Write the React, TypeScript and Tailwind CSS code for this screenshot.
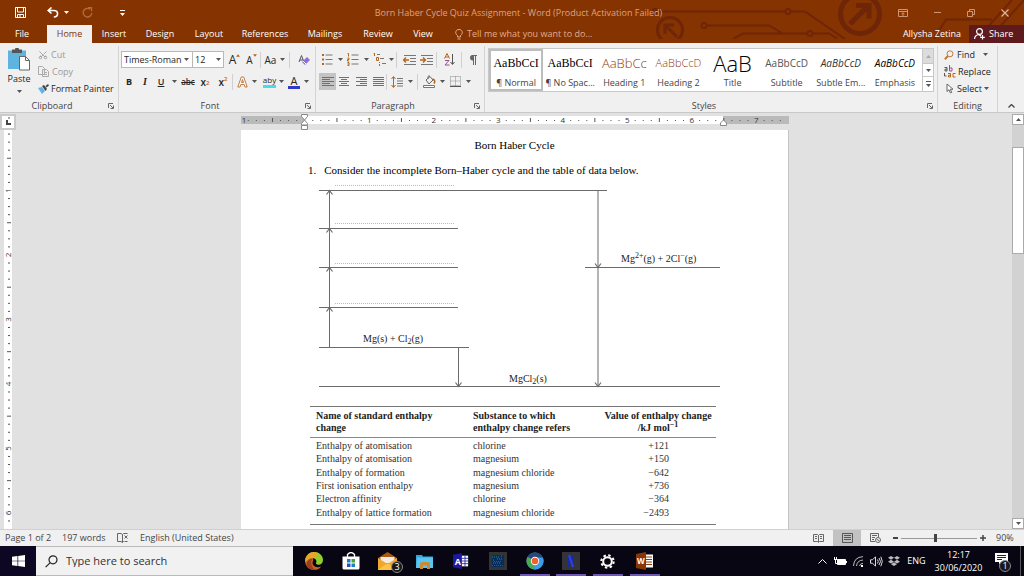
import React from "react";
import { FaDropbox } from "react-icons/fa";
import { FiScissors } from "react-icons/fi";
import { twMerge } from "tailwind-merge";

const tabs = [
  { name: "Insert", width: "w-11" },
  { name: "Design", width: "w-12" },
  { name: "Layout", width: "w-[50px]" },
  { name: "References", width: "w-[62px]" },
  { name: "Mailings", width: "w-[58px]" },
  { name: "Review", width: "w-12" },
  { name: "View", width: "w-[42px]" },
];

const styles = [
  { name: "¶ Normal", sample: "AaBbCcI", look: "font-['Liberation_Serif'] text-[12px] text-black" },
  { name: "¶ No Spac...", sample: "AaBbCcI", look: "font-['Liberation_Serif'] text-[12px] text-black" },
  { name: "Heading 1", sample: "AaBbCc", look: "font-light text-[13px] text-[#8a3c14]" },
  { name: "Heading 2", sample: "AaBbCcD", look: "font-light text-[11px] text-[#8a3c14]" },
  { name: "Title", sample: "AaB", look: "font-light text-[22px] text-black" },
  { name: "Subtitle", sample: "AaBbCcD", look: "text-[10px] text-[#555]" },
  { name: "Subtle Em...", sample: "AaBbCcD", look: "italic text-[10px] text-[#333]" },
  { name: "Emphasis", sample: "AaBbCcD", look: "italic text-[10px] text-black" },
];

const enthalpies = [
  ["Enthalpy of atomisation", "chlorine", "+121"],
  ["Enthalpy of atomisation", "magnesium", "+150"],
  ["Enthalpy of formation", "magnesium chloride", "−642"],
  ["First ionisation enthalpy", "magnesium", "+736"],
  ["Electron affinity", "chlorine", "−364"],
  ["Enthalpy of lattice formation", "magnesium chloride", "−2493"],
];

type BtnProps = { label: string; className?: string; children?: React.ReactNode };

const Btn = ({ label, className = "", children }: BtnProps) => (
  <button aria-label={label} className={twMerge("flex h-[17px] shrink-0 items-center justify-center", className)}>
    {children}
  </button>
);

const Caret = () => (
  <svg width="5" height="3" viewBox="0 0 5 3" className="shrink-0">
    <path d="M0 0h5L2.500 3z" fill="#555" />
  </svg>
);

const Sep = () => <div className="h-4 w-px shrink-0 bg-[#d0d0d0]" />;

const Launcher = ({ label }: { label: string }) => (
  <button aria-label={label} className="ml-1">
    <svg width="6" height="6" viewBox="0 0 6 6" fill="none" stroke="#666">
      <path d="M.5 5V.5H5M2 2l3 3M5.500 2.500v3h-3" />
    </svg>
  </button>
);

const Group = ({ name, launcher, className, children }: { name: string; launcher?: boolean; className: string; children: React.ReactNode }) => (
  <section className={`flex flex-col border-r border-[#d4d4d4] ${className}`}>
    <div className="flex-1">{children}</div>
    <div className={`flex h-3 items-center text-[#444] ${launcher ? "pr-1" : ""}`}>
      <span className="flex-1 text-center">{name}</span>
      {launcher && <Launcher label={`${name} settings`} />}
    </div>
  </section>
);

const Lines = ({ rows }: { rows: number[][] }) => (
  <svg width="12" height="11" viewBox="0 0 12 11" stroke="#707070">
    {rows.map(([a, b], i) => (
      <path key={i} d={`M${a} ${i * 2 + 1.5}H${b}`} />
    ))}
  </svg>
);

const ListIcon = ({ kind }: { kind: "dots" | "numbers" | "levels" }) => (
  <svg width="13" height="13" viewBox="0 0 13 13">
    {kind === "dots" && (
      <g>
        <path d="M4.500 2h7M4.500 6.500h7M4.500 11h7" stroke="#777" />
        <path d="M1 1h2v2H1zM1 5.500h2v2H1zM1 10h2v2H1z" fill="#b5651d" />
      </g>
    )}
    {kind === "numbers" && (
      <g>
        <path d="M4.500 2h7M4.500 6.500h7M4.500 11h7" stroke="#777" />
        <path d="M.5 .5h1v3M.5 5h1.500v1.500H.5V8H2M.5 9.500h1.500v3H.5M.5 11H2" stroke="#b5651d" fill="none" />
      </g>
    )}
    {kind === "levels" && (
      <g fill="none">
        <path d="M4 1.500h3M7 5.500h4M9 10.500h4" stroke="#777" />
        <path d="M.5 0h1v3M3.500 4.500h2v3h-2zM6.500 9v1M6.500 11v2" stroke="#b5651d" />
      </g>
    )}
  </svg>
);

const IndentIcon = ({ right }: { right?: boolean }) => (
  <svg width="14" height="12" viewBox="0 0 14 12" fill="none">
    <path d="M1 1.500h12M7 4.500h6M7 7.500h6M1 10.500h12" stroke="#777" />
    <path d={right ? "M0 6h5M3 3.500L5.500 6 3 8.500" : "M6 6H1M3 3.500L.5 6 3 8.500"} stroke="#b5651d" strokeWidth="1.400" />
  </svg>
);

const Circuit = () => (
  <svg className="absolute right-0 top-0" width="374" height="39" viewBox="650 0 374 39" fill="none" stroke="#6f2508" strokeWidth="2">
    <circle cx="655" cy="11.500" r="2.500" />
    <path d="M658 11.500h127M791 11.500h14L845 39M707 25.500h62l14 8h24M733 39l10-5.500h40M813 33.500h16l8 5" />
    <circle cx="788" cy="11.500" r="2.500" />
    <circle cx="704" cy="25.500" r="2.500" />
    <circle cx="810" cy="33.500" r="2.500" />
    <circle cx="860" cy="14" r="19.500" strokeWidth="5" />
    <path d="M850 24l18-18M856 5.500h13v13" strokeWidth="5" />
    <circle cx="670" cy="30" r="12.500" strokeWidth="3" />
    <path d="M677 37l-11-11M665 34v-9h9" strokeWidth="3" />
    <path d="M934 39l12-19.500h46M984 31l28-31M996 31l28-31" />
  </svg>
);

const TitleBar = () => (
  <header className="relative bg-[#853300] text-white">
    <Circuit />
    <div className="relative flex h-[25px] items-center">
      <div className="flex flex-1 items-center pl-[15px]">
        <button aria-label="Save">
          <svg width="11" height="11" viewBox="0 0 11 11" fill="none" stroke="#fff">
            <path d="M.5 .5h10v10H.5zM2.500 .5V5h6V.5M2.500 10.500V7.500h6v3M5 8v2.500" />
          </svg>
        </button>
        <button aria-label="Undo" className="ml-[21px]">
          <svg width="12" height="11" viewBox="0 0 12 11" fill="none" stroke="#fff" strokeWidth="1.600">
            <path d="M4.500 .5L1.200 3.500l3.300 3M1.500 3.500h5.300c5 0 5 6.500 0 6.500" />
          </svg>
        </button>
        <svg className="ml-[5px]" width="5" height="3" viewBox="0 0 5 3">
          <path d="M0 0h5L2.500 3z" fill="#fff" />
        </svg>
        <button aria-label="Repeat" className="ml-[13px]">
          <svg width="11" height="11" viewBox="0 0 11 11" fill="none" stroke="#b06a3c" strokeWidth="1.400">
            <path d="M8 2.200A4.300 4.300 0 1 0 9.800 6M6 .7h3.500v3.500" />
          </svg>
        </button>
        <button aria-label="Customize Quick Access Toolbar" className="ml-[27px]">
          <svg width="5" height="6" viewBox="0 0 5 6" fill="#fff">
            <path d="M0 0h5v1H0zM0 3h5L2.500 6z" />
          </svg>
        </button>
      </div>
      <h1 className="text-[#dca483]">Born Haber Cycle Quiz Assignment - Word (Product Activation Failed)</h1>
      <div className="flex flex-1 justify-end pr-[2px] text-[#cf9473]">
        <Btn label="Ribbon Display Options" className="w-[34px]">
          <svg width="10" height="8" viewBox="0 0 10 8" fill="none" stroke="currentColor">
            <path d="M.5 .5h9v7h-9zM.5 2.500h9M5 7V4M3.500 5L5 3.800 6.500 5" />
          </svg>
        </Btn>
        <Btn label="Minimize" className="w-[34px]">
          <span className="h-px w-[7px] bg-current" />
        </Btn>
        <Btn label="Restore" className="w-[34px]">
          <svg width="8" height="8" viewBox="0 0 8 8" fill="none" stroke="currentColor">
            <path d="M.5 2.500h5v5h-5zM2.500 2V.5h5v5H6" />
          </svg>
        </Btn>
        <Btn label="Close" className="w-[34px]">
          <svg width="8" height="8" viewBox="0 0 8 8" fill="none" stroke="#e2b49a" strokeWidth="1.200">
            <path d="M.5 .5l7 7M7.500 .5l-7 7" />
          </svg>
        </Btn>
      </div>
    </div>
    <nav className="relative flex h-[18px]">
      <button className="w-11">File</button>
      <button className="ml-[3px] w-[45px] bg-[#f0f0f0] text-[#853300]">Home</button>
      {tabs.map((tab) => (
        <button key={tab.name} className={`text-center ${tab.width}`}>
          {tab.name}
        </button>
      ))}
      <button className="ml-[11px] flex items-center gap-1 text-[#e0ad90]">
        <svg width="8" height="11" viewBox="0 0 8 11" fill="none" stroke="currentColor">
          <path d="M2.500 8V6.500C-.5 4.500 .5 .5 4 .5s4.500 4 1.500 6V8zM2.500 10h3" />
        </svg>
        Tell me what you want to do...
      </button>
      <button className="ml-auto pr-2">Allysha Zetina</button>
      <button className="flex w-[55px] items-center gap-1 bg-[#5f1a1e] pl-[5px]">
        <svg width="11" height="12" viewBox="0 0 11 12" fill="none" stroke="#fff" strokeWidth="1.200">
          <circle cx="5.500" cy="3.500" r="2.900" />
          <path d="M.6 11C.6 8.500 2.500 7 4.500 6.500L7 8M8.500 7v4.500M6.200 9.300h4.600" />
        </svg>
        Share
      </button>
    </nav>
  </header>
);

const Clipboard = () => (
  <Group name="Clipboard" launcher className="w-[119px]">
    <div className="flex">
      <button className="flex w-[38px] flex-col items-center pt-[2px]">
        <svg width="22" height="23" viewBox="0 0 22 23">
          <path d="M0 2.500h18V21H0z" fill="#5fb4df" />
          <path d="M4 1.500h3a2 2 0 0 1 4 0h3V5H4z" fill="#555" />
          <path d="M11.500 8.500h6l4 4V22h-10z" fill="#fff" stroke="#666" />
          <path d="M17.500 8.500v4h4" fill="none" stroke="#666" />
        </svg>
        <span className="leading-[16px]">Paste</span>
        <span className="flex h-2 items-center">
          <Caret />
        </span>
      </button>
      <div className="flex flex-col">
        <button className="flex h-[17px] items-center text-[#999]">
          <FiScissors size={10} className="mr-[3px] -rotate-90" />
          Cut
        </button>
        <button className="flex h-[17px] items-center text-[#999]">
          <svg className="mr-[3px]" width="11" height="11" viewBox="0 0 11 11" fill="#f0f0f0" stroke="#aaa">
            <path d="M.5 .5h4l2 2v6h-6zM4.500 3.500h4l2 2v5h-6zM6 6.500h3M6 8.500h3" />
          </svg>
          Copy
        </button>
        <button className="flex h-[17px] items-center">
          <svg className="mr-[2px]" width="11" height="10" viewBox="0 0 11 10">
            <path d="M0 4l4-1 3 4-3 3z" fill="#5fb4df" />
            <path d="M4 2l2-1 3 4-1.500 2zM7.500 2L10 0l1 1.500L8.500 3.500z" fill="#444" />
          </svg>
          Format Painter
        </button>
      </div>
    </div>
  </Group>
);

const Font = () => (
  <Group name="Font" launcher className="w-[197px]">
    <div className="flex items-center pl-[2px] pt-[5px]">
      <label className="relative flex">
        <select aria-label="Font" defaultValue="Times-Roman" className="h-[17px] w-[72px] appearance-none border border-[#b8b8b8] bg-white pl-[2px] leading-[15px]">
          <option>Times-Roman</option>
        </select>
        <span className="absolute right-1 top-[7px]">
          <Caret />
        </span>
      </label>
      <label className="relative -ml-px flex">
        <select aria-label="Font size" defaultValue="12" className="h-[17px] w-8 appearance-none border border-[#b8b8b8] bg-white pl-[2px] leading-[15px]">
          <option>12</option>
        </select>
        <span className="absolute right-[3px] top-[7px]">
          <Caret />
        </span>
      </label>
      <Btn label="Increase font size" className="ml-[2px] w-[17px] text-[12px]">
        A
        <svg className="-mt-2" width="4" height="3" viewBox="0 0 5 3">
          <path d="M0 3h5L2.500 0z" fill="#b5651d" />
        </svg>
      </Btn>
      <Btn label="Decrease font size" className="w-[17px] text-[10px]">
        A
        <svg className="-mt-2" width="4" height="3" viewBox="0 0 5 3">
          <path d="M0 0h5L2.500 3z" fill="#b5651d" />
        </svg>
      </Btn>
      <Sep />
      <Btn label="Change case" className="w-7 gap-1 text-[10px]">
        Aa <Caret />
      </Btn>
      <Sep />
      <Btn label="Clear all formatting" className="w-7">
        <svg width="12" height="12" viewBox="0 0 12 12">
          <path d="M1 8L3.500 1.500 6 8M2 6h3" stroke="#555" fill="none" />
          <path d="M4 8l5-5 3 3-5 5z" fill="#8a70d8" />
          <path d="M5 7l3 3" stroke="#fff" />
        </svg>
      </Btn>
    </div>
    <div className="flex items-center pl-[2px] pt-[5px]">
      <Btn label="Bold" className="w-4 font-bold">B</Btn>
      <Btn label="Italic" className="w-4 font-['Liberation_Serif'] text-[10px] font-bold italic">I</Btn>
      <Btn label="Underline" className="w-4 font-semibold underline">U</Btn>
      <span className="flex w-[11px] justify-center">
        <Caret />
      </span>
      <Btn label="Strikethrough" className="w-4 text-[8px] font-semibold line-through">abc</Btn>
      <Btn label="Subscript" className="w-[18px] text-[10px] font-semibold">
        x<sub className="text-[6px] text-[#b5651d]">2</sub>
      </Btn>
      <Btn label="Superscript" className="w-[18px] text-[10px] font-semibold">
        x<sup className="text-[6px] text-[#b5651d]">2</sup>
      </Btn>
      <Sep />
      <Btn label="Text effects" className="w-7 gap-1">
        <svg width="11" height="12" viewBox="0 0 11 12" fill="#fff" stroke="#c07a3e">
          <path d="M.8 11L4.300 1h2.400l3.500 10H8l-.8-2.500H3.800L3 11zM4.500 6.500h2L5.500 3.500z" />
        </svg>
        <Caret />
      </Btn>
      <Btn label="Text highlight color" className="w-[25px] gap-[3px]">
        <span className="flex flex-col items-center border-b-[3px] border-[#3fe0e8] text-[8px] leading-[10px]">aby</span>
        <Caret />
      </Btn>
      <Btn label="Font color" className="w-[25px] gap-1">
        <span className="w-3 border-b-[3px] border-[#3238c8] text-[11px] leading-[11px]">A</span>
        <Caret />
      </Btn>
    </div>
  </Group>
);

const Paragraph = () => (
  <Group name="Paragraph" launcher className="w-[169px]">
    <div className="flex items-center pl-[3px] pt-[5px]">
      <Btn label="Bullets" className="w-[26px] gap-1">
        <ListIcon kind="dots" />
        <Caret />
      </Btn>
      <Btn label="Numbering" className="w-[26px] gap-1">
        <ListIcon kind="numbers" />
        <Caret />
      </Btn>
      <Btn label="Multilevel list" className="w-[25px] gap-[3px]">
        <ListIcon kind="levels" />
        <Caret />
      </Btn>
      <Sep />
      <Btn label="Decrease indent" className="ml-1 w-[17px]">
        <IndentIcon />
      </Btn>
      <Btn label="Increase indent" className="w-[17px]">
        <IndentIcon right />
      </Btn>
      <span className="w-px" />
      <Sep />
      <Btn label="Sort" className="w-6">
        <svg width="11" height="13" viewBox="0 0 11 13" fill="none">
          <path d="M.5 5.500L3 .5l2.500 5M1.500 4h3" stroke="#b5651d" />
          <path d="M1 7.500h4L1 12h4.500" stroke="#a04a9a" />
          <path d="M8.500 1v10M6.500 9l2 2.500 2-2.500" stroke="#555" />
        </svg>
      </Btn>
      <Sep />
      <Btn label="Show paragraph marks" className="w-[22px]">
        <svg width="8" height="10" viewBox="0 0 8 10">
          <path d="M3.500 0H8v1H7v9H6V1H5v9H4V5.500a2.700 2.700 0 0 1-.5-5.500z" fill="#666" />
        </svg>
      </Btn>
    </div>
    <div className="flex items-center pl-[3px] pt-[5px]">
      <Btn label="Align left" className="w-[17px] bg-[#c4c4c4]">
        <Lines rows={[[0, 12], [0, 8], [0, 12], [0, 8], [0, 12]]} />
      </Btn>
      <Btn label="Center" className="w-4">
        <Lines rows={[[1, 11], [3, 9], [1, 11], [3, 9], [1, 11]]} />
      </Btn>
      <Btn label="Align right" className="w-[17px]">
        <Lines rows={[[1, 12], [5, 12], [1, 12], [5, 12], [1, 12]]} />
      </Btn>
      <Btn label="Justify" className="w-[17px]">
        <Lines rows={[[1, 12], [1, 12], [1, 12], [1, 12], [1, 12]]} />
      </Btn>
      <Sep />
      <Btn label="Line spacing" className="w-[30px] gap-1">
        <svg width="13" height="12" viewBox="0 0 13 12" fill="none">
          <path d="M6 2.500h6M6 5h6M6 7.500h6M6 10h6" stroke="#777" />
          <path d="M2.500 1v10M.5 3l2-2.500 2 2.500M.5 9l2 2.500 2-2.500" stroke="#b5651d" />
        </svg>
        <Caret />
      </Btn>
      <Sep />
      <Btn label="Shading" className="ml-1 w-6 gap-1">
        <svg width="13" height="13" viewBox="0 0 13 13" fill="none">
          <path d="M3 5l4-3.500L10 5 6 9zM5 4V1.500q1-1.500 2 0" stroke="#666" />
          <path d="M9.500 4c3 1 2.500 3 1.500 4.500" stroke="#b5651d" strokeWidth="1.500" />
          <path d="M.5 10.500h11v2H.5z" fill="#fff" stroke="#777" />
        </svg>
        <Caret />
      </Btn>
      <Btn label="Borders" className="w-[29px] gap-[5px]">
        <svg width="11" height="11" viewBox="0 0 11 11" fill="none">
          <path d="M.5 .5h10v9H.5zM5.500 .5v9M.5 5h10" stroke="#888" strokeDasharray="1 1" />
          <path d="M0 10.500h11" stroke="#555" />
        </svg>
        <Caret />
      </Btn>
    </div>
  </Group>
);

const Styles = () => (
  <Group name="Styles" launcher className="min-w-0 flex-1">
    <div className="mx-[3px] mt-[2px] flex h-11 border border-[#c8c8c8] bg-white">
      {styles.map((style, i) => (
        <button
          key={style.name}
          className={`flex min-w-0 flex-1 flex-col items-center border-2 ${i === 0 ? "border-[#bdbdbd]" : "border-transparent"}`}
        >
          <span className={`h-[26px] leading-[24px] ${style.look}`}>{style.sample}</span>
          <span className="leading-[12px] text-[#444]">{style.name}</span>
        </button>
      ))}
      <div className="flex w-[11px] flex-col border-l border-[#c8c8c8]">
        <Btn label="Scroll styles up" className="h-[14px] bg-[#dcdcdc]">
          <svg width="5" height="3" viewBox="0 0 5 3">
            <path d="M0 3h5L2.500 0z" fill="#aaa" />
          </svg>
        </Btn>
        <Btn label="Scroll styles down" className="h-[14px] border-y border-[#c8c8c8]">
          <Caret />
        </Btn>
        <Btn label="More styles" className="h-[14px]">
          <svg width="5" height="6" viewBox="0 0 5 6" fill="#555">
            <path d="M0 0h5v1H0zM0 3h5L2.500 6z" />
          </svg>
        </Btn>
      </div>
    </div>
  </Group>
);

const Editing = () => (
  <Group name="Editing" className="w-[60px]">
    <div className="flex flex-col pl-[6px]">
      <button className="flex h-[17px] items-center">
        <svg className="mr-[3px]" width="10" height="10" viewBox="0 0 10 10" fill="none" stroke="#c07a3e">
          <circle cx="6" cy="3.800" r="3" />
          <path d="M4 6L.8 9.200" strokeWidth="2" />
        </svg>
        <span className="mr-2">Find</span>
        <Caret />
      </button>
      <button className="flex h-[17px] items-center">
        <svg className="mr-[2px]" width="12" height="13" viewBox="0 0 12 13" fill="none">
          <path d="M.5 2.500h2.500V6H1V4.200h2" stroke="#555" />
          <path d="M5.500 0v6h2.500V3H5.500" stroke="#a04a9a" />
          <path d="M4 8.500h2.500V12H4.500v-1.800h2M11.500 8.500H9V12h2.500" stroke="#b5651d" />
          <path d="M.5 8v3h2" stroke="#555" />
        </svg>
        Replace
      </button>
      <button className="flex h-[17px] items-center">
        <svg className="ml-[2px] mr-[3px]" width="8" height="11" viewBox="0 0 8 11" fill="#fff" stroke="#666">
          <path d="M1 1v7.500l2-1.800 1.400 3.300 1.300-.6-1.400-3.200H7z" />
        </svg>
        <span className="mr-[2px]">Select</span>
        <Caret />
      </button>
    </div>
  </Group>
);

const inches = [1, 2, 3, 4, 5, 6, 7];

const HorizontalRuler = () => (
  <svg className="block" width="548" height="16" viewBox="241 114 548 16">
    <path d="M241 116h548v8H241z" fill="#fff" />
    <path d="M241 116h64v8h-64zM723 116h66v8h-66z" fill="#bababa" />
    <g fill="#555">
      {Array.from({ length: 67 }, (_, i) => i - 7).map((n) => {
        const x = 304.7 + n * 8.06;
        if (n % 8 === 0) return null;
        return n % 4 === 0 ? <rect key={n} x={x - 0.5} y="118" width="1" height="4" /> : <rect key={n} x={x - 0.5} y="120" width="1" height="1" />;
      })}
    </g>
    <g fontSize="8" fill="#333" textAnchor="middle">
      <text x="244" y="123">1</text>
      {inches.map((n) => (
        <text key={n} x={304.7 + n * 64.5} y="123">
          {n}
        </text>
      ))}
    </g>
    <g fill="#fff" stroke="#888">
      <path d="M301.500 114.500h6v2l-3 3.500-3-3.500zM301.500 125v-1.500l3-3.500 3 3.500v1.500zM301.500 125.500h6v4h-6zM720.500 125.500v-2.500l3-3 3 3v2.500z" />
    </g>
  </svg>
);

const VerticalRuler = () => (
  <div className="flex w-[18px] flex-col overflow-hidden">
    <div className="flex h-4 items-start">
      <Btn label="Left tab" className="h-4 w-4 border-2 border-[#cacaca] bg-white">
        <svg width="5" height="5" viewBox="0 0 5 5">
          <path d="M1 0v4h4" stroke="#444" strokeWidth="2" fill="none" />
        </svg>
      </Btn>
    </div>
    <div className="ml-1 min-h-0 w-2 flex-1 bg-white">
      <svg className="overflow-visible" width="8" height="400" viewBox="4 130 8 400" fill="#555">
        {Array.from({ length: 57 }, (_, i) => i - 7).map((n) => {
          const y = 126 + n * 8.06;
          if (n % 8 === 0) return null;
          return n % 4 === 0 ? <rect key={n} x="7" y={y - 0.5} width="4" height="1" /> : <rect key={n} x="8" y={y - 0.5} width="2" height="1" />;
        })}
        {[1, 2, 3, 4, 5, 6].map((n) => (
          <text key={n} fontSize="8" fill="#333" textAnchor="middle" transform={`translate(11 ${126 + n * 64.5}) rotate(-90)`}>
            {n}
          </text>
        ))}
      </svg>
    </div>
  </div>
);

const BornHaberCycle = () => (
  <svg className="block" width="420" height="214" viewBox="310 180 420 214" fill="none" stroke="#6b6b6b">
    <path d="M319 190.500h288M319 228.500h139M319 267.500h139M319 307.500h139M319 347.500h150M585 267.500h135M319 386.500h401" />
    <path d="M329.500 347V191M458.500 347v39M598 191v195" />
    <path
      d="M326.500 194.500l3-4 3 4M326.500 232.500l3-4 3 4M326.500 271.500l3-4 3 4M326.500 311.500l3-4 3 4M455.500 382.500l3 4 3-4M595 263.500l3 4 3-4M595 382.500l3 4 3-4"
      strokeWidth="1.200"
    />
    <path d="M335 185.500h119M335 223.500h119M335 263.500h119M335 303.500h119" stroke="#bbb" strokeDasharray="1 1" />
    <g fill="#222" stroke="none" fontSize="10" className="font-['Liberation_Serif']">
      <text x="363" y="342">
        Mg(s) + Cl<tspan fontSize="8" dy="2">2</tspan>
        <tspan dy="-2">(g)</tspan>
      </text>
      <text x="509" y="382">
        MgCl<tspan fontSize="8" dy="2">2</tspan>
        <tspan dy="-2">(s)</tspan>
      </text>
      <text x="621" y="262">
        Mg<tspan fontSize="8" dy="-4">2+</tspan>
        <tspan dy="4">(g) + 2Cl</tspan>
        <tspan fontSize="8" dy="-4">−</tspan>
        <tspan dy="4">(g)</tspan>
      </text>
    </g>
  </svg>
);

const EnthalpyTable = () => (
  <table className="ml-[69px] mt-3 h-[119px] w-[406px] border-y border-[#777] text-[10px] leading-[12px] text-[#333]">
    <thead>
      <tr className="border-b border-[#888] text-left align-top text-[#222]">
        <th className="w-[157px] pb-[3px] pl-[6px] pt-[3px]">
          Name of standard enthalpy
          <br />
          change
        </th>
        <th className="w-[133px] pb-[3px] pl-[6px] pt-[3px]">
          Substance to which
          <br />
          enthalpy change refers
        </th>
        <th className="pb-[3px] pt-[3px] text-center">
          Value of enthalpy change
          <br />
          /kJ mol<sup className="text-[8px]">−1</sup>
        </th>
      </tr>
    </thead>
    <tbody>
      {enthalpies.map(([name, substance, value]) => (
        <tr key={name + substance} className="[&:first-child>td]:pt-px [&:last-child>td]:pb-1">
          <td className="pl-[6px]">{name}</td>
          <td className="pl-[6px]">{substance}</td>
          <td className="pr-[47px] text-right">{value}</td>
        </tr>
      ))}
    </tbody>
  </table>
);

const Workspace = () => (
  <main className="flex min-h-0 flex-1 border-t border-[#c8c8c8] bg-[#e1e1e1] pt-px">
    <VerticalRuler />
    <div className="flex min-w-0 flex-1 flex-col items-center overflow-hidden">
      <HorizontalRuler />
      <article className="min-h-0 w-[548px] flex-1 overflow-hidden border-r border-[#c4c4c4] bg-white pt-2 font-['Liberation_Serif'] text-[11px] leading-[14px] text-black">
        <p className="text-center">Born Haber Cycle</p>
        <p className="flex gap-2 pb-[3px] pl-[67px] pt-[11px]">
          <span>1.</span>
          <span>Consider the incomplete Born–Haber cycle and the table of data below.</span>
        </p>
        <div className="pl-[69px]">
          <BornHaberCycle />
        </div>
        <EnthalpyTable />
      </article>
    </div>
    <div className="flex w-3 flex-col bg-[#d2d2d2]">
      <Btn label="Scroll up" className="h-[11px] border border-[#aaa] bg-white">
        <svg width="5" height="3" viewBox="0 0 5 3">
          <path d="M0 3h5L2.500 0z" fill="#555" />
        </svg>
      </Btn>
      <div className="mt-[22px] h-[107px] border border-[#aaa] bg-white" />
      <Btn label="Scroll down" className="mt-auto h-[11px] border border-[#aaa] bg-white">
        <Caret />
      </Btn>
    </div>
  </main>
);

const StatusBar = () => (
  <div className="flex h-[17px] items-center border-t border-[#d0d0d0] bg-[#f0f0f0] pl-[5px] text-[#444]">
    <span className="w-[57px]">Page 1 of 2</span>
    <span className="w-[55px]">197 words</span>
    <Btn label="Proofing errors" className="h-4 w-[11px]">
      <svg width="11" height="10" viewBox="0 0 11 10" fill="none" stroke="#666">
        <path d="M5.500 9.500L4 8.500H.5v-8H4l1.500 1 1-1h4M5.500 1.500v8l1-1h1M7.500 2.500l3 3M10.500 2.500l-3 3M8 8.500h2.500" />
      </svg>
    </Btn>
    <span className="ml-3">English (United States)</span>
    <div className="ml-auto flex items-center">
      <Btn label="Read mode" className="h-4 w-[29px]">
        <svg width="11" height="9" viewBox="0 0 11 9" fill="none" stroke="#666">
          <path d="M.5 .5h4l1 1 1-1h4v7h-4l-1 1-1-1h-4zM5.500 1v7M2 2.500h2M2 4.500h2M7 2.500h2M7 4.500h2" />
        </svg>
      </Btn>
      <Btn label="Print layout" className="h-4 w-7 bg-[#c2c2c2]">
        <svg width="11" height="10" viewBox="0 0 11 10" fill="none" stroke="#555">
          <path d="M.5 .5h10v9H.5zM2 2.500h7M2 4.500h7M2 6.500h7" />
        </svg>
      </Btn>
      <Btn label="Web layout" className="h-4 w-[29px]">
        <svg width="11" height="10" viewBox="0 0 11 10" fill="none" stroke="#666">
          <path d="M5 8.500H.5v-8h8V4M2 2.500h5M2 4.500h3M2 6.500h2" />
          <circle cx="8" cy="7" r="2.500" />
          <path d="M6.500 6l3 2" />
        </svg>
      </Btn>
      <Btn label="Zoom out" className="h-4 w-[11px]">
        <span className="h-[2px] w-[5px] bg-[#444]" />
      </Btn>
      <input
        type="range"
        aria-label="Zoom"
        min={10}
        max={190}
        defaultValue={92}
        className="h-2 w-[76px] appearance-none bg-[linear-gradient(#999,#999)] bg-[length:100%_1px] bg-center bg-no-repeat [&::-webkit-slider-thumb]:h-2 [&::-webkit-slider-thumb]:w-[3px] [&::-webkit-slider-thumb]:appearance-none [&::-webkit-slider-thumb]:bg-[#444]"
      />
      <Btn label="Zoom in" className="h-4 w-[11px]">
        <svg width="6" height="6" viewBox="0 0 6 6" stroke="#444" strokeWidth="1.500">
          <path d="M3 0v6M0 3h6" />
        </svg>
      </Btn>
      <span className="ml-2 w-7">90%</span>
    </div>
  </div>
);

const apps = [
  {
    name: "Microsoft Edge",
    icon: (
      <svg width="18" height="18" viewBox="0 0 18 18">
        <path d="M9 0C3.500 0 .2 4 0 9c.1 5 4 9 9 9 3.500 0 6-1.500 7-3.500-2 1.200-4.800 1-6.500-.2C7.500 13 7 10.500 8 9z" fill="#c9602a" />
        <path d="M.3 7.500C1.500 3 5 0 9 0c5 0 9 3.500 9 8 0 3-2 4.700-4.500 4.700-2 0-3-.9-2.300-2.200C12 8.500 10.500 6 7.500 6 4.500 6 2 8 .5 10z" fill="#8fcf2c" />
        <path d="M.3 7.500C1.500 3 5 0 9 0c2 0 3.500.6 5 1.600C12 3 11 5 11 7.300 9 5 4 5 .5 10z" fill="#e8a52a" />
        <path d="M1.500 13.500C1.500 9.500 4 7 7.500 6.800 5 10 6 15.500 10.500 17.900 6.500 18.500 3 16.500 1.500 13.500z" fill="#9c3f1e" />
      </svg>
    ),
  },
  {
    name: "Microsoft Store",
    icon: (
      <svg width="18" height="18" viewBox="0 0 18 18">
        <path d="M5.500 5V2.500Q9-1.500 12.500 2.500V5" fill="none" stroke="#fff" strokeWidth="1.300" />
        <path d="M.5 4.500h17V16q0 1.500-1.500 1.500H2Q.5 17.500.5 16z" fill="#fff" />
        <path d="M5 7h3.500v3.500H5zM9.500 11.500H13V15H9.500z" fill="#1f7fc4" />
        <path d="M9.500 7H13v3.500H9.500z" fill="#4ba338" />
        <path d="M5 11.500h3.500V15H5z" fill="#2b4fbd" />
      </svg>
    ),
  },
  {
    name: "Mail",
    badge: "3",
    icon: (
      <svg width="19" height="18" viewBox="0 0 19 18">
        <path d="M0 6l9.500-6L19 6v12H0z" fill="#a85a14" />
        <path d="M2.500 5h14v6h-14z" fill="#f4ece4" />
        <path d="M0 6l9.500 6L19 6v12H0z" fill="#f0a72c" />
        <path d="M0 18l9.500-7 9.500 7z" fill="#ffc04c" />
      </svg>
    ),
  },
  {
    name: "File Explorer",
    icon: (
      <svg width="17" height="15" viewBox="0 0 17 15">
        <path d="M0 1h6l1 1.500h10V14H0z" fill="#36a3dc" />
        <path d="M1 3.500h16V14H0z" fill="#58c6ee" />
        <path d="M4 15V10q0-2 2-2h6q2 0 2 2v5h-3v-3.500H7V15z" fill="#c98a35" />
      </svg>
    ),
  },
  {
    name: "Access",
    icon: (
      <svg width="18" height="16" viewBox="0 0 18 18">
        <path d="M8 3h9v12H8z" fill="#fff" />
        <path d="M10 6h7M10 9h7M10 12h7M13.500 3v12" stroke="#2b2aa0" />
        <path d="M0 2l10-2v18L0 16z" fill="#1c18a0" />
        <text x="2" y="13" fontSize="10" fontWeight="700" fill="#fff">A</text>
      </svg>
    ),
  },
  {
    name: "System monitor",
    icon: (
      <svg width="18" height="18" viewBox="0 0 18 18">
        <path d="M0 0h18v18H0z" fill="#343434" />
        <path d="M3 3h12v12H3z" fill="#062c5c" />
        <path d="M3 5h7M12 4h2M4 8h2M8 7h6M4 11h8" stroke="#1f8a86" strokeDasharray="1 1" />
        <path d="M3 13.500h12M5 9.500h8" stroke="#1560a8" strokeDasharray="1 1" />
      </svg>
    ),
  },
  {
    name: "Chrome",
    open: true,
    icon: (
      <svg width="18" height="18" viewBox="0 0 18 18">
        <circle cx="9" cy="9" r="8.500" fill="#3b8de0" />
        <path d="M9 9L1.600 4.700A8.500 8.500 0 0 0 8 17.400L12.500 11z" fill="#48a854" />
        <path d="M9 9L8 17.400A8.500 8.500 0 0 0 16.800 5.500H9z" fill="#3b9de8" />
        <path d="M9 9L1.600 4.700A8.500 8.500 0 0 1 16.800 5.500H9z" fill="#28477c" />
        <circle cx="9" cy="9" r="4.200" fill="#fff" />
        <circle cx="9" cy="9" r="3.300" fill="#f06030" />
      </svg>
    ),
  },
  {
    name: "Netflix",
    open: true,
    icon: (
      <svg width="18" height="18" viewBox="0 0 18 18">
        <path d="M0 0h18v18H0z" fill="#343438" />
        <path d="M7 15V3M11 15V3" stroke="#1728a8" strokeWidth="2" />
        <path d="M7 3l4 12" stroke="#2a44e8" strokeWidth="2" />
      </svg>
    ),
  },
  {
    name: "Settings",
    open: true,
    icon: (
      <svg width="15" height="15" viewBox="0 0 15 15" fill="none" stroke="#fff">
        <circle cx="7.500" cy="7.500" r="4.300" strokeWidth="2" />
        <circle cx="7.500" cy="7.500" r="6.200" strokeWidth="2" strokeDasharray="2.400 2.470" />
      </svg>
    ),
  },
  {
    name: "Word",
    open: true,
    icon: (
      <svg width="18" height="18" viewBox="0 0 18 18">
        <path d="M8 2.500h9v13H8z" fill="#fff" />
        <path d="M10 5h6M10 7.500h6M10 10h6M10 12.500h6" stroke="#8a3a10" />
        <path d="M0 2l10-2v18L0 16z" fill="#8a3508" />
        <text x="1" y="12" fontSize="8" fontWeight="700" fill="#fff">W</text>
      </svg>
    ),
  },
];

const Taskbar = () => (
  <footer className="flex h-[30px] bg-[#080612] text-white">
    <Btn label="Start" className="h-full w-9 bg-[#0d0724]">
      <svg width="13" height="12" viewBox="0 0 13 12" fill="#fff">
        <path d="M0 1.800l5.500-.8v4.700H0zM6.200 .9L13 0v5.700H6.200zM0 6.300h5.500V11L0 10.200zM6.200 6.300H13V12l-6.800-.9z" />
      </svg>
    </Btn>
    <label className="flex w-[257px] items-center gap-2 border-y border-[#bbb] bg-[#f1f1f1] pl-[9px]">
      <svg width="13" height="13" viewBox="0 0 13 13" fill="none" stroke="#222" strokeWidth="1.200">
        <circle cx="8" cy="4.800" r="4" />
        <path d="M5 7.800L.6 12.200" />
      </svg>
      <input type="text" aria-label="Search" placeholder="Type here to search" className="min-w-0 flex-1 bg-transparent text-[11px] text-[#222] outline-none placeholder:text-[#333]" />
    </label>
    <div className="ml-[3px] flex w-[367px]">
      {apps.map((app) => (
        <button key={app.name} aria-label={app.name} className="relative flex flex-1 items-center justify-center">
          {app.icon}
          {app.badge && (
            <span className="absolute bottom-[3px] right-[3px] flex h-3 w-3 items-center justify-center rounded-full border border-[#888] bg-[#181818]">{app.badge}</span>
          )}
          {app.open && <span className="absolute bottom-0 h-[2px] w-[30px] bg-[#6f56b8]" />}
        </button>
      ))}
    </div>
    <div className="ml-auto flex items-center">
      <Btn label="Show hidden icons" className="w-[18px]">
        <svg width="9" height="5" viewBox="0 0 9 5" fill="none" stroke="#fff">
          <path d="M.5 4.500l4-4 4 4" />
        </svg>
      </Btn>
      <Btn label="Battery" className="w-[18px]">
        <svg width="13" height="9" viewBox="0 0 13 9" fill="none" stroke="#fff">
          <path d="M3.500 2.500h8v5h-8zM12.500 4v2M.5 0v2M2.500 0v2M0 2.500h3.500M1.500 3v3.500h2" />
          <path d="M4 3h7v4H4z" fill="#fff" stroke="none" />
        </svg>
      </Btn>
      <Btn label="Wi-Fi" className="w-[18px]">
        <svg width="11" height="11" viewBox="0 0 11 11" fill="none" stroke="#bbb">
          <path d="M.5 10Q1 1 10 .7M3.500 10Q4 4.500 10 4M6.500 10Q7 7.500 10 7.300" />
          <path d="M8 9h2v2H8z" fill="#fff" stroke="none" />
        </svg>
      </Btn>
      <Btn label="Volume" className="w-[18px]">
        <svg width="13" height="11" viewBox="0 0 13 11" fill="none" stroke="#ddd">
          <path d="M.5 3.800h2l3-3v9.400l-3-3h-2zM7.500 3.500q1.500 2 0 4M9 2q3 3.500 0 7M10.800 .7q3 4.800 0 9.600" />
        </svg>
      </Btn>
      <Btn label="Dropbox" className="w-[18px] text-[#bbb]">
        <FaDropbox size={12} />
      </Btn>
      <span className="w-[27px] text-center">ENG</span>
      <div className="flex w-[57px] flex-col items-center leading-[13px]">
        <span>12:17</span>
        <span>30/06/2020</span>
      </div>
      <Btn label="Notifications" className="relative ml-[7px] h-[30px] w-[27px] border-r border-[#555]">
        <svg className="-mt-1 mr-3" width="13" height="12" viewBox="0 0 13 12">
          <path d="M0 0h13v9H6.500L4 11.500V9H0z" fill="#fff" />
          <path d="M2 2.500h9M2 4.500h9M2 6.500h5" stroke="#222" />
        </svg>
        <span className="absolute right-[9px] top-[14px] flex h-3 w-3 items-center justify-center rounded-full border border-[#888] bg-[#181820]">1</span>
      </Btn>
      <span className="w-[3px]" />
    </div>
  </footer>
);

const App = () => {
  return (
    <div className="flex h-screen flex-col overflow-hidden whitespace-nowrap bg-[#e1e1e1] font-['Open_Sans',sans-serif] text-[9px] leading-[12px] text-[#262626]">
      <TitleBar />
      <div className="flex h-[69px] bg-[#f0f0f0] pt-[3px]">
        <Clipboard />
        <Font />
        <Paragraph />
        <Styles />
        <Editing />
        <button aria-label="Collapse the ribbon" className="flex w-[26px] items-end justify-center pb-1">
          <svg width="7" height="4" viewBox="0 0 7 4" fill="none" stroke="#444" strokeWidth="1.300">
            <path d="M.5 3.500l3-3 3 3" />
          </svg>
        </button>
      </div>
      <Workspace />
      <StatusBar />
      <Taskbar />
    </div>
  );
};

export default App;
